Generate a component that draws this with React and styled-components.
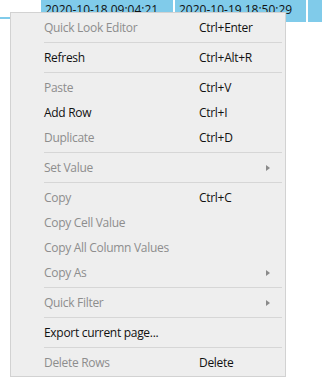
import styled, { createGlobalStyle } from "styled-components";

const GlobalStyle = createGlobalStyle`
  html, body {
    margin: 0;
    padding: 0;
    background: #ffffff;
    font-family: "Open Sans", "Noto Sans", sans-serif;
  }
`;

const Screen = styled.div`
  position: relative;
  width: 324px;
  height: 392px;
  overflow: hidden;
  background: #ffffff;
`;

const GridRow = styled.div`
  display: flex;
  height: 22px;
`;

const Cell = styled.div`
  flex: ${(p) => (p.grow ? "1" : "none")};
  width: ${(p) => p.width}px;
  margin-right: 2px;
  background: ${(p) => (p.selected ? "#80cbea" : "#ffffff")};
  border-bottom: ${(p) => (p.selected ? "none" : "2px solid #80cbea")};
  height: ${(p) => (p.selected ? 22 : 19)}px;
  box-sizing: border-box;
  padding: 1px 0 0 4px;
  font-size: 12px;
  color: #111111;
  white-space: nowrap;
  overflow: hidden;
`;

const Menu = styled.div`
  position: absolute;
  left: 10px;
  top: 12px;
  width: 276px;
  box-sizing: border-box;
  background: #eeeeee;
  border: 1px solid #d2d2d2;
  padding: 2px 0 1px;
  font-size: 12px;
  letter-spacing: -0.3px;
`;

const Item = styled.div`
  display: grid;
  grid-template-columns: 155px 1fr 8px;
  align-items: center;
  height: 25px;
  padding: 0 11px 0 33px;
  color: ${(p) => (p.disabled ? "#8d8d8d" : "#111111")};
`;

const Shortcut = styled.span`
  color: #111111;
`;

const Arrow = styled.span`
  width: 0;
  height: 0;
  border-top: 3.5px solid transparent;
  border-bottom: 3.5px solid transparent;
  border-left: 4px solid #8a8a8a;
`;

const Separator = styled.div`
  height: 1px;
  margin: 2px 3px 2px 33px;
  background: #d6d6d6;
`;

const menu = [
  { label: "Quick Look Editor", key: "Ctrl+Enter", disabled: true },
  "sep",
  { label: "Refresh", key: "Ctrl+Alt+R" },
  "sep",
  { label: "Paste", key: "Ctrl+V", disabled: true },
  { label: "Add Row", key: "Ctrl+I" },
  { label: "Duplicate", key: "Ctrl+D", disabled: true },
  "sep",
  { label: "Set Value", sub: true, disabled: true },
  "sep",
  { label: "Copy", key: "Ctrl+C", disabled: true },
  { label: "Copy Cell Value", disabled: true },
  { label: "Copy All Column Values", disabled: true },
  { label: "Copy As", sub: true, disabled: true },
  "sep",
  { label: "Quick Filter", sub: true, disabled: true },
  "sep",
  { label: "Export current page..." },
  "sep",
  { label: "Delete Rows", key: "Delete", disabled: true },
];

export default function App() {
  return (
    <Screen>
      <GlobalStyle />
      <GridRow>
        <Cell width={39} />
        <Cell width={132} selected>
          2020-10-18 09:04:21
        </Cell>
        <Cell width={131} selected>
          2020-10-19 18:50:29
        </Cell>
        <Cell grow selected />
      </GridRow>
      <Menu>
        {menu.map((m, i) =>
          m === "sep" ? (
            <Separator key={i} />
          ) : (
            <Item key={i} disabled={m.disabled}>
              <span>{m.label}</span>
              <Shortcut>{m.key}</Shortcut>
              {m.sub ? <Arrow /> : <span />}
            </Item>
          )
        )}
      </Menu>
    </Screen>
  );
}
